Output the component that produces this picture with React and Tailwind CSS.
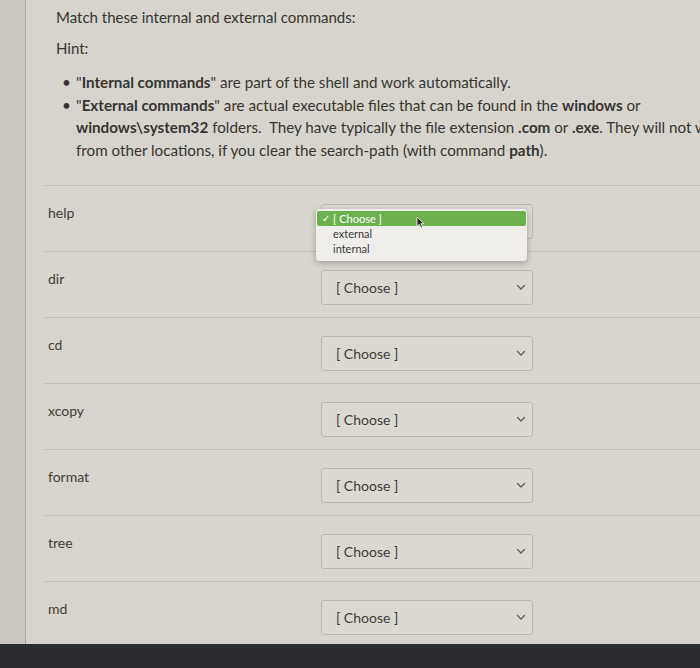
import React from "react";

const rows = ["help", "dir", "cd", "xcopy", "format", "tree", "md"];

function Chevron() {
  return (
    <svg width="10" height="7" viewBox="0 0 10 7" className="shrink-0">
      <path d="M1.5 1.5 L5 5 L8.5 1.5" fill="none" stroke="#5a5854" strokeWidth="1.2" strokeLinecap="round" strokeLinejoin="round" />
    </svg>
  );
}

function Select({ covered }) {
  return (
    <div className="mt-[18px] w-[212px] h-[35px] rounded-[3px] border border-[#b9b6af] bg-[#dbd8d1] flex items-center justify-between pl-[14px] pr-[6px]">
      <span className={covered ? "text-[14px] text-[#3d3c3a] invisible" : "text-[14px] text-[#3d3c3a]"}>[ Choose ]</span>
      <Chevron />
    </div>
  );
}

export default function App() {
  return (
    <div
      className="relative w-[700px] h-[668px] overflow-hidden bg-[#d7d4cd] flex flex-col text-[#363532]"
      style={{ fontFamily: "Lato, 'Open Sans', sans-serif" }}
    >
      <div className="flex flex-1 min-h-0">
        <div className="w-[26px] shrink-0 bg-[#cbc8c1] border-r border-[#a9a69f]" />
        <div className="flex-1 min-w-0">
          <div className="pl-[30px] pt-[7px]">
            <div className="text-[15px] leading-[20px] whitespace-nowrap">Match these internal and external commands:</div>
            <div className="text-[15px] leading-[20px] mt-[11px]">Hint:</div>
            <ul className="mt-[13px] text-[15.2px] leading-[22.5px] whitespace-nowrap">
              <li className="flex">
                <span className="w-[20px] shrink-0 pl-[6px]">•</span>
                <span>
                  "<b className="font-bold">Internal commands</b>" are part of the shell and work automatically.
                </span>
              </li>
              <li className="flex">
                <span className="w-[20px] shrink-0 pl-[6px]">•</span>
                <span>
                  "<b className="font-bold">External commands</b>" are actual executable files that can be found in the <b className="font-bold">windows</b> or
                  <br />
                  <b className="font-bold">windows\system32</b> folders.&nbsp; They have typically the file extension <b className="font-bold">.com</b> or <b className="font-bold">.exe</b>. They will not work
                  <br />
                  from other locations, if you clear the search-path (with command <b className="font-bold">path</b>).
                </span>
              </li>
            </ul>
          </div>
          <div className="mt-[24px] ml-[19px]">
            {rows.map((r, i) => (
              <div key={r} className="h-[66px] border-t border-[#bfbcb5] flex items-start">
                <div className="w-[276px] pl-[3px] pt-[17px] text-[14px] leading-[20px] text-[#3f3e3b]">{r}</div>
                <Select covered={i === 0} />
              </div>
            ))}
          </div>
        </div>
      </div>
      <div className="h-[24px] shrink-0 bg-[#2b2d31]" />

      {/* open dropdown menu */}
      <div className="absolute left-[316px] top-[209px] w-[211px] h-[52px] rounded-[4px] bg-[#efeeea] shadow-[0_2px_6px_rgba(0,0,0,0.25)] py-[2px] px-[1px] text-[11px] leading-[15px]">
        <div className="h-[15px] bg-[#6cb14e] text-white flex items-center rounded-[2px]">
          <span className="w-[16px] pl-[5px] text-[10px]">✓</span>
          <span>[ Choose ]</span>
        </div>
        <div className="pl-[16px] text-[#3a3936]">external</div>
        <div className="pl-[16px] text-[#3a3936]">internal</div>
      </div>
      {/* cursor */}
      <svg className="absolute left-[416px] top-[216px]" width="9" height="13" viewBox="0 0 9 13">
        <path d="M1 1 L1 10.5 L3.3 8.3 L5 12 L6.5 11.3 L4.9 7.7 L8 7.7 Z" fill="#222" stroke="#fff" strokeWidth="0.8" />
      </svg>
    </div>
  );
}
